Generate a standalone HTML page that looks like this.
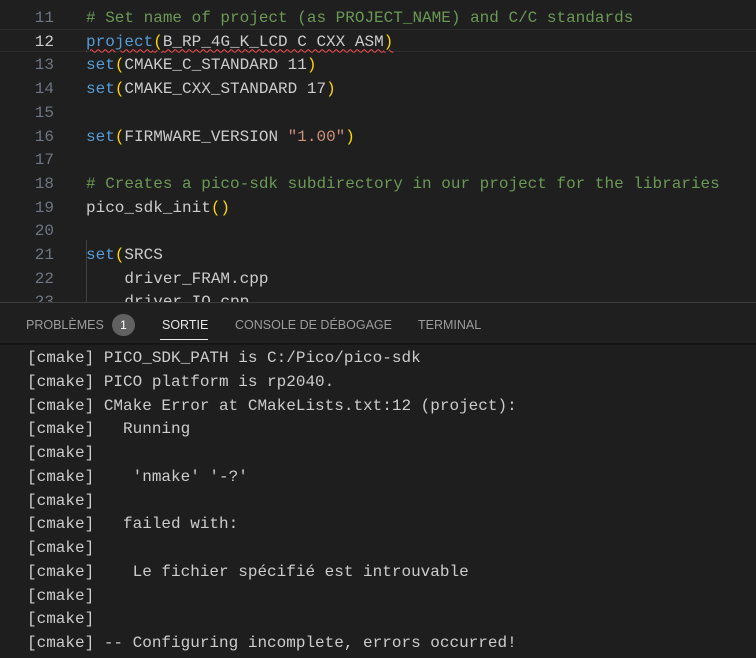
<!DOCTYPE html>
<html><head><meta charset="utf-8"><style>
*{margin:0;padding:0;box-sizing:border-box}
body{width:756px;height:658px;background:#1f1f1f;overflow:hidden;position:relative;font-family:"Liberation Mono",monospace;font-size:16px;color:#cccccc}
.l{position:absolute;left:86px;white-space:pre;line-height:24px;height:24px}
.n{position:absolute;width:54px;text-align:right;left:0;color:#6e7681;line-height:24px;white-space:pre}
.c{color:#6a9955}.k{color:#569cd6}.p{color:#ffd700}.s{color:#ce9178}.t{color:#cccccc}
.o{position:absolute;left:27px;white-space:pre;line-height:24px;color:#cccccc}
.tab{position:absolute;top:318px;font-family:"Liberation Sans",sans-serif;font-size:12.5px;color:#9d9d9d}
</style></head><body>
<div style="position:absolute;left:0;top:29px;width:756px;height:23px;border-top:1px solid #2c2c2c;border-bottom:1px solid #2c2c2c"></div>
<div style="position:absolute;left:86px;top:240px;width:1px;height:62px;background:#404040"></div>
<div class="n" style="top:6px">11</div><div class="l c" style="top:6px"># Set name of project (as PROJECT_NAME) and C/C standards</div>
<div class="n" style="top:29.7px;color:#cccccc">12</div><div class="l" style="top:29.7px;text-decoration:underline wavy #f14c4c;text-decoration-thickness:1px;text-underline-offset:3px"><span class="k">project</span><span class="p">(</span>B_RP_4G_K_LCD C CXX ASM<span class="p">)</span></div>
<div class="n" style="top:53.4px">13</div><div class="l" style="top:53.4px"><span class="k">set</span><span class="p">(</span>CMAKE_C_STANDARD 11<span class="p">)</span></div>
<div class="n" style="top:77.1px">14</div><div class="l" style="top:77.1px"><span class="k">set</span><span class="p">(</span>CMAKE_CXX_STANDARD 17<span class="p">)</span></div>
<div class="n" style="top:100.8px">15</div>
<div class="n" style="top:124.5px">16</div><div class="l" style="top:124.5px"><span class="k">set</span><span class="p">(</span>FIRMWARE_VERSION <span class="s">"1.00"</span><span class="p">)</span></div>
<div class="n" style="top:148.2px">17</div>
<div class="n" style="top:171.9px">18</div><div class="l c" style="top:171.9px"># Creates a pico-sdk subdirectory in our project for the libraries</div>
<div class="n" style="top:195.6px">19</div><div class="l" style="top:195.6px">pico_sdk_init<span class="p">()</span></div>
<div class="n" style="top:219.3px">20</div>
<div class="n" style="top:243px">21</div><div class="l" style="top:243px"><span class="k">set</span><span class="p">(</span>SRCS</div>
<div class="n" style="top:266.7px">22</div><div class="l" style="top:266.7px">    driver_FRAM.cpp</div>
<div class="n" style="top:290.4px">23</div><div class="l" style="top:290.4px">    driver_IO.cpp</div>
<div style="position:absolute;left:0;top:302px;width:756px;height:356px;background:#1e1e1e;border-top:1px solid #3c3c3c"></div>
<div style="position:absolute;left:0;top:303px;width:756px;height:42px;background:#1f1f1f;border-bottom:2px solid #161616"></div>
<div class="tab" style="left:26px">PROBLÈMES</div>
<div style="position:absolute;left:112px;top:314px;width:23px;height:22px;border-radius:11px;background:#616161;color:#fff;font-family:'Liberation Sans',sans-serif;font-size:12px;text-align:center;line-height:22px">1</div>
<div class="tab" style="left:162px;color:#e7e7e7">SORTIE</div>
<div style="position:absolute;left:160px;top:339px;width:48px;height:1px;background:#e7e7e7"></div>
<div class="tab" style="left:235px">CONSOLE DE DÉBOGAGE</div>
<div class="tab" style="left:418px">TERMINAL</div>
<div class="o" style="top:346px">[cmake] PICO_SDK_PATH is C:/Pico/pico-sdk</div>
<div class="o" style="top:369.75px">[cmake] PICO platform is rp2040.</div>
<div class="o" style="top:393.5px">[cmake] CMake Error at CMakeLists.txt:12 (project):</div>
<div class="o" style="top:417.25px">[cmake]   Running</div>
<div class="o" style="top:441px">[cmake]</div>
<div class="o" style="top:464.75px">[cmake]    'nmake' '-?'</div>
<div class="o" style="top:488.5px">[cmake]</div>
<div class="o" style="top:512.25px">[cmake]   failed with:</div>
<div class="o" style="top:536px">[cmake]</div>
<div class="o" style="top:559.75px">[cmake]    Le fichier spécifié est introuvable</div>
<div class="o" style="top:583.5px">[cmake]</div>
<div class="o" style="top:607.25px">[cmake]</div>
<div class="o" style="top:631px">[cmake] -- Configuring incomplete, errors occurred!</div>
</body></html>
